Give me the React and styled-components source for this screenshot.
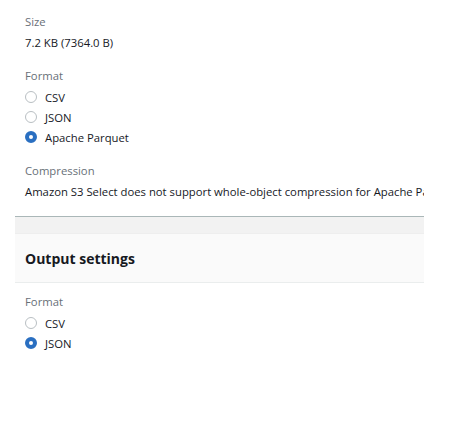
import styled, { createGlobalStyle } from "styled-components";

const GlobalStyle = createGlobalStyle`
  body {
    margin: 0;
    background: #fff;
    font-family: "Open Sans", "Liberation Sans", sans-serif;
    color: #16191f;
  }
`;

const Page = styled.div`
  width: 409px;
  margin-left: 15px;
  padding-top: 14px;
  overflow: hidden;
`;

const Section = styled.div`
  padding-left: 10px;
  padding-top: ${({ $top }) => $top || 0}px;
  display: flex;
  flex-direction: column;
`;

const Field = styled.div`
  display: flex;
  flex-direction: column;
  margin-bottom: ${({ $gap }) => $gap || 0}px;
`;

const Label = styled.div`
  font-size: 11.3px;
  line-height: 16px;
  color: #687078;
  margin-bottom: ${({ $gap }) => $gap || 0}px;
`;

const Value = styled.div`
  font-size: 11.3px;
  line-height: 16px;
  color: #16191f;
  white-space: nowrap;
`;

const Option = styled.label`
  display: flex;
  align-items: center;
  gap: 8px;
  height: 20px;
  font-size: 11.3px;
  color: #16191f;
`;

const Dot = styled.span`
  box-sizing: border-box;
  width: 12px;
  height: 12px;
  border-radius: 50%;
  flex-shrink: 0;
  border: ${({ $on }) => ($on ? "4px solid #2a6fc1" : "1px solid #b9bfc3")};
  background: #fff;
`;

const Header = styled.div`
  margin-top: 16px;
  border-top: 1px solid #aab7b8;
  border-bottom: 1px solid #eaeded;
  background: #fafafa;
`;

const Band = styled.div`
  height: 16px;
  background: #f2f2f2;
  border-bottom: 1px solid #eeeeee;
`;

const Title = styled.h2`
  margin: 0;
  height: 48px;
  display: flex;
  align-items: center;
  padding-left: 10px;
  font-size: 14px;
  font-weight: 700;
  color: #16191f;
`;

const Radio = ({ on, children }) => (
  <Option>
    <Dot $on={on} />
    {children}
  </Option>
);

export default function App() {
  return (
    <>
      <GlobalStyle />
      <Page>
        <Section>
          <Field $gap={17}>
            <Label $gap={5}>Size</Label>
            <Value>7.2 KB (7364.0 B)</Value>
          </Field>
          <Field $gap={16}>
            <Label $gap={3}>Format</Label>
            <Radio>CSV</Radio>
            <Radio>JSON</Radio>
            <Radio on>Apache Parquet</Radio>
          </Field>
          <Field>
            <Label $gap={5}>Compression</Label>
            <Value>
              Amazon S3 Select does not support whole-object compression for Apache Parquet objects.
            </Value>
          </Field>
        </Section>
        <Header>
          <Band />
          <Title>Output settings</Title>
        </Header>
        <Section $top={11}>
          <Field>
            <Label $gap={3}>Format</Label>
            <Radio>CSV</Radio>
            <Radio on>JSON</Radio>
          </Field>
        </Section>
      </Page>
    </>
  );
}
